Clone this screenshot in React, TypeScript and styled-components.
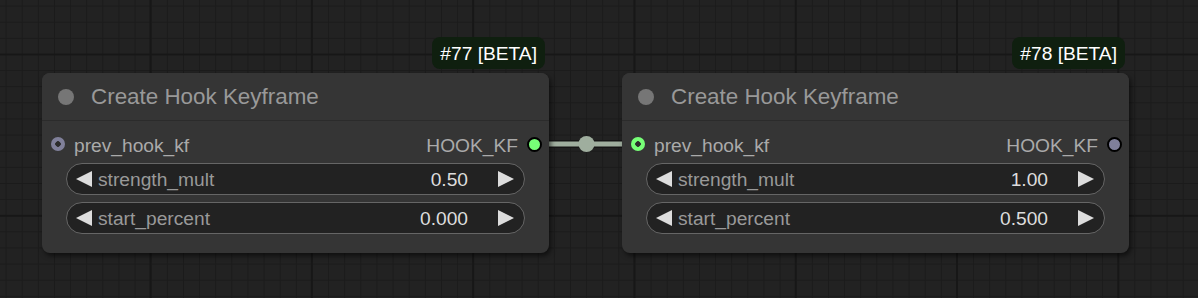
import React from "react";
import styled, { createGlobalStyle } from "styled-components";

const GlobalStyle = createGlobalStyle`
  html, body {
    margin: 0;
    padding: 0;
    background: #222;
  }
  body {
    font-family: "Liberation Sans", Arial, sans-serif;
  }
`;

type WidgetData = { label: string; value: string };
type SlotKind = "linked" | "idle";

type NodeData = {
  id: number;
  x: number;
  y: number;
  input: SlotKind;
  output: SlotKind;
  widgets: WidgetData[];
};

const nodes: NodeData[] = [
  {
    id: 77,
    x: 42,
    y: 73,
    input: "idle",
    output: "linked",
    widgets: [
      { label: "strength_mult", value: "0.50" },
      { label: "start_percent", value: "0.000" },
    ],
  },
  {
    id: 78,
    x: 622,
    y: 73,
    input: "linked",
    output: "idle",
    widgets: [
      { label: "strength_mult", value: "1.00" },
      { label: "start_percent", value: "0.500" },
    ],
  },
];

const GREEN = "#7f7";
const GREY = "#80809a";

export default function App() {
  return (
    <>
      <GlobalStyle />
      <Canvas>
        <LinkLayer width="1198" height="298">
          <line x1="540" y1="144" x2="634" y2="144" stroke="#151515" strokeWidth="8" />
          <line x1="540" y1="144" x2="634" y2="144" stroke="#9fae9e" strokeWidth="5" />
          <circle cx="586.5" cy="144" r="8" fill="#9fae9e" />
        </LinkLayer>
        {nodes.map((n) => (
          <GraphNode key={n.id} data={n} />
        ))}
      </Canvas>
    </>
  );
}

const GraphNode = ({ data }: { data: NodeData }) => (
  <NodeBox $x={data.x} $y={data.y}>
    <Badge>#{data.id} [BETA]</Badge>
    <TitleBar>
      <TitleDot />
      <TitleText>Create Hook Keyframe</TitleText>
    </TitleBar>
    <SlotRow>
      <Slot>
        <InputDot $color={data.input === "linked" ? GREEN : GREY} />
        <SlotLabel>prev_hook_kf</SlotLabel>
      </Slot>
      <Slot>
        <SlotLabel>HOOK_KF</SlotLabel>
        <OutputDot $color={data.output === "linked" ? GREEN : GREY} />
      </Slot>
    </SlotRow>
    <Widgets>
      {data.widgets.map((w) => (
        <Widget key={w.label}>
          <Arrow width="16" height="16" viewBox="0 0 16 16">
            <polygon points="16,0 0,8 16,16" />
          </Arrow>
          <WidgetLabel>{w.label}</WidgetLabel>
          <WidgetValue>{w.value}</WidgetValue>
          <Arrow width="16" height="16" viewBox="0 0 16 16">
            <polygon points="0,0 16,8 0,16" />
          </Arrow>
        </Widget>
      ))}
    </Widgets>
  </NodeBox>
);

const Canvas = styled.div`
  position: relative;
  width: 1198px;
  height: 298px;
  overflow: hidden;
  background-color: #222;
  background-image:
    linear-gradient(to right, #171717 2px, transparent 2px),
    linear-gradient(to bottom, #171717 2px, transparent 2px),
    linear-gradient(to right, #1b1b1b 1px, transparent 1px),
    linear-gradient(to bottom, #1b1b1b 1px, transparent 1px);
  background-size:
    161.3px 161.3px,
    161.3px 161.3px,
    16.13px 16.13px,
    16.13px 16.13px;
  background-position:
    149.5px 0,
    0 53.5px,
    5.6px 0,
    0 5.6px;
`;

const LinkLayer = styled.svg`
  position: absolute;
  left: 0;
  top: 0;
`;

const NodeBox = styled.div<{ $x: number; $y: number }>`
  position: absolute;
  left: ${(p) => p.$x}px;
  top: ${(p) => p.$y}px;
  width: 507px;
  height: 180px;
  box-sizing: border-box;
  display: flex;
  flex-direction: column;
  background: #353535;
  border-radius: 8px;
  box-shadow: 2px 3px 5px rgba(0, 0, 0, 0.55);
`;

const Badge = styled.div`
  position: absolute;
  right: 4px;
  top: -36px;
  height: 32px;
  padding: 1px 8px 0;
  box-sizing: border-box;
  display: flex;
  align-items: center;
  background: #0f1f0f;
  border-radius: 8px;
  color: #fff;
  font-size: 19.2px;
  white-space: nowrap;
`;

const TitleBar = styled.div`
  height: 48px;
  display: flex;
  align-items: center;
  padding-left: 16px;
  gap: 17px;
  border-bottom: 1px solid #2b2b2b;
  box-sizing: border-box;
  border-radius: 8px 8px 0 0;
  background: #353535;
`;

const TitleDot = styled.span`
  width: 16px;
  height: 16px;
  border-radius: 50%;
  background: #767676;
`;

const TitleText = styled.span`
  color: #999;
  font-size: 22.4px;
  line-height: 48px;
  white-space: nowrap;
`;

const SlotRow = styled.div`
  height: 32px;
  margin-top: 7px;
  display: flex;
  align-items: center;
  justify-content: space-between;
  padding: 0 7px 0 9px;
`;

const Slot = styled.div`
  display: flex;
  align-items: center;
  gap: 9px;
`;

const SlotLabel = styled.span`
  color: #aaa;
  font-size: 19.2px;
  line-height: 32px;
  padding-top: 3px;
  white-space: nowrap;
`;

const InputDot = styled.span<{ $color: string }>`
  width: 14px;
  height: 14px;
  border-radius: 50%;
  background: radial-gradient(circle, #2c2c2c 0 2.5px, ${(p) => p.$color} 3px);
`;

const OutputDot = styled.span<{ $color: string }>`
  width: 15px;
  height: 15px;
  box-sizing: border-box;
  border-radius: 50%;
  border: 2px solid #000;
  background: ${(p) => p.$color};
`;

const Widgets = styled.div`
  display: flex;
  flex-direction: column;
  gap: 7px;
  margin-top: 3px;
  padding: 0 24px;
`;

const Widget = styled.div`
  height: 32px;
  box-sizing: border-box;
  display: flex;
  align-items: center;
  padding: 0 10px 0 9px;
  background: #222;
  border: 1px solid #666;
  border-radius: 16px;
  font-size: 19.2px;
`;

const Arrow = styled.svg`
  flex: none;
  fill: #ddd;
`;

const WidgetLabel = styled.span`
  margin-left: 6px;
  padding-top: 2px;
  color: #999;
  white-space: nowrap;
`;

const WidgetValue = styled.span`
  margin-left: auto;
  margin-right: 30px;
  padding-top: 2px;
  color: #ddd;
  white-space: nowrap;
`;
